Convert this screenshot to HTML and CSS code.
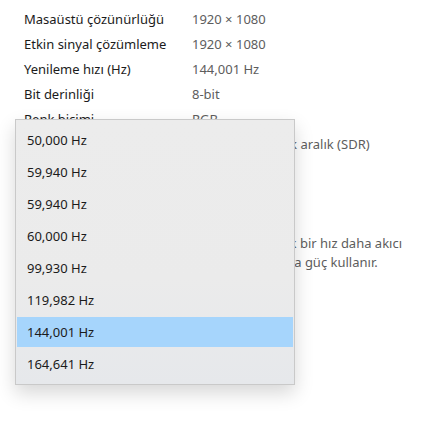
FILE: index.html
```html
<!DOCTYPE html>
<html lang="tr">
<head>
<meta charset="utf-8">
<link rel="stylesheet" href="styles.css">
</head>
<body>
<div class="page">
  <div class="props">
    <div class="label">Masaüstü çözünürlüğü</div><div class="value">1920 × 1080</div>
    <div class="label">Etkin sinyal çözümleme</div><div class="value">1920 × 1080</div>
    <div class="label">Yenileme hızı (Hz)</div><div class="value">144,001 Hz</div>
    <div class="label">Bit derinliği</div><div class="value">8-bit</div>
    <div class="label">Renk biçimi</div><div class="value">RGB</div>
    <div class="label">Renk alanı</div><div class="value">Standart dinamik aralık (SDR)</div>
  </div>
  <div class="desc">
    <div class="line">Ekran için yenileme hızını seçin. Daha yüksek bir hız daha akıcı</div>
    <div class="line">hareket sağlar, ancak ekranınız çok daha fazla güç kullanır.</div>
  </div>
  <div class="menu">
    <div class="item">50,000 Hz</div>
    <div class="item">59,940 Hz</div>
    <div class="item">59,940 Hz</div>
    <div class="item">60,000 Hz</div>
    <div class="item">99,930 Hz</div>
    <div class="item">119,982 Hz</div>
    <div class="item selected">144,001 Hz</div>
    <div class="item">164,641 Hz</div>
  </div>
</div>
</body>
</html>
```
FILE: styles.css
```css
html, body {
  margin: 0;
  background: #ffffff;
}
body {
  font-family: "Noto Sans", "Open Sans", sans-serif;
  font-size: 13px;
  color: #1b1b1b;
}
.page {
  position: relative;
  width: 435px;
  height: 425px;
  overflow: hidden;
}
.props {
  display: grid;
  grid-template-columns: 168px 1fr;
  grid-auto-rows: 25px;
  align-items: center;
  padding: 6px 0 0 24px;
}
.value {
  color: #5d5d5d;
  white-space: nowrap;
}
.desc {
  margin-top: 78px;
  padding-left: 24px;
  color: #5d5d5d;
  line-height: 19px;
}
.line {
  white-space: nowrap;
}
.menu {
  position: absolute;
  left: 15px;
  top: 119px;
  width: 278px;
  padding: 4px 0;
  display: flex;
  flex-direction: column;
  border: 1px solid #c9c9c9;
  background: linear-gradient(180deg, #ececec 0%, #ebebeb 60%, #e6e8eb 100%);
  box-shadow: 0 8px 18px rgba(0, 0, 0, 0.16);
}
.item {
  height: 30px;
  margin: 1px;
  padding-left: 10px;
  display: flex;
  align-items: center;
  color: #1b1b1b;
}
.item.selected {
  background: #a6d5fc;
}
```
